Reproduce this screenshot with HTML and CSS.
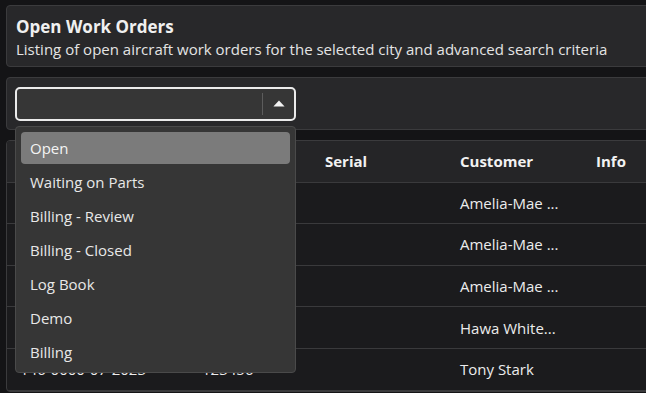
FILE: index.html
```html
<!doctype html>
<html lang="en-us">
  <head>
    <meta charset="utf-8">
    <title>Open Work Orders</title>
    <link rel="stylesheet" href="styles.css">
  </head>
  <body>
    <div class="page">
      <section class="card intro">
        <h1>Open Work Orders</h1>
        <p>Listing of open aircraft work orders for the selected city and advanced search criteria</p>
      </section>

      <section class="card filter">
        <div class="picker">
          <div class="select">
            <span class="value"></span>
            <span class="divider"></span>
            <span class="caret">
              <svg width="12" height="7" viewBox="0 0 12 7"><path d="M6 0.6 L11.4 6.2 Q11.6 6.6 11.1 6.6 L0.9 6.6 Q0.4 6.6 0.6 6.2 Z" fill="#f2f2f2"/></svg>
            </span>
          </div>
          <ul class="menu">
            <li class="active">Open</li>
            <li>Waiting on Parts</li>
            <li>Billing - Review</li>
            <li>Billing - Closed</li>
            <li>Log Book</li>
            <li>Demo</li>
            <li>Billing</li>
          </ul>
        </div>
      </section>

      <section class="card orders">
        <div class="row head">
          <span></span>
          <span></span>
          <span>Serial</span>
          <span>Customer</span>
          <span>Info</span>
        </div>
        <div class="row">
          <span></span>
          <span></span>
          <span></span>
          <span>Amelia-Mae ...</span>
          <span></span>
        </div>
        <div class="row">
          <span></span>
          <span></span>
          <span></span>
          <span>Amelia-Mae ...</span>
          <span></span>
        </div>
        <div class="row">
          <span></span>
          <span></span>
          <span></span>
          <span>Amelia-Mae ...</span>
          <span></span>
        </div>
        <div class="row">
          <span></span>
          <span></span>
          <span></span>
          <span>Hawa White...</span>
          <span></span>
        </div>
        <div class="row">
          <span>146-0000-07-2023</span>
          <span>123456</span>
          <span></span>
          <span>Tony Stark</span>
          <span></span>
        </div>
      </section>
    </div>
  </body>
</html>
```

FILE: styles.css
```css
html, body { padding: 0; margin: 0; overflow: hidden; height: 100%; }
body {
  background-color: #141416;
  color: #ececec;
  font-family: "Open Sans", "Noto Sans", sans-serif;
}

.page {
  width: 660px;
  padding: 5px 0 0 6px;
  display: flex;
  flex-direction: column;
  gap: 10px;
}

.card {
  background-color: #28282a;
  border: 1px solid #3b3b3d;
  border-radius: 4px;
}

/* heading card */
.intro {
  box-sizing: border-box;
  height: 62px;
  padding: 10px 9px 0;
}
.intro h1 {
  margin: 0;
  font-size: 17px;
  font-weight: 700;
  line-height: 22px;
  color: #f0f0f0;
}
.intro p {
  margin: 1px 0 0;
  font-size: 15px;
  line-height: 20px;
  color: #e4e4e4;
}

/* status filter */
.filter {
  height: 53px;
  box-sizing: border-box;
  padding: 9px 8px;
}
.picker {
  position: relative;
  width: 281px;
}
.select {
  height: 34px;
  box-sizing: border-box;
  border: 2px solid #ebebeb;
  border-radius: 5px;
  background-color: #363636;
  display: flex;
  align-items: center;
}
.select .value { flex: 1; }
.select .divider {
  width: 1px;
  height: 22px;
  background-color: #5c5c5c;
}
.select .caret {
  width: 31px;
  display: flex;
  justify-content: center;
  padding-bottom: 2px;
}

.menu {
  position: absolute;
  top: 39px;
  left: 0;
  right: 0;
  z-index: 2;
  margin: 0;
  padding: 5px 5px 4px;
  list-style: none;
  background-color: #363636;
  border: 1px solid #4a4a4a;
  border-radius: 4px;
  display: flex;
  flex-direction: column;
  gap: 2px;
}
.menu li {
  height: 32px;
  line-height: 32px;
  padding: 0 9px;
  border-radius: 4px;
  font-size: 15px;
  color: #e8e8e8;
}
.menu li.active {
  background-color: #7b7b7b;
  color: #f4f4f4;
}

/* orders table */
.orders {
  background-color: #1b1b1d;
  overflow: hidden;
}
.row {
  display: grid;
  grid-template-columns: 182px 123px 135px 136px 1fr;
  align-items: center;
  height: 41.6px;
  box-sizing: border-box;
  padding-left: 13px;
  border-bottom: 1px solid #3a3a3c;
  font-size: 15px;
  color: #ececec;
}
.row.head {
  background-color: #252527;
  font-weight: 700;
  color: #f2f2f2;
}
```
